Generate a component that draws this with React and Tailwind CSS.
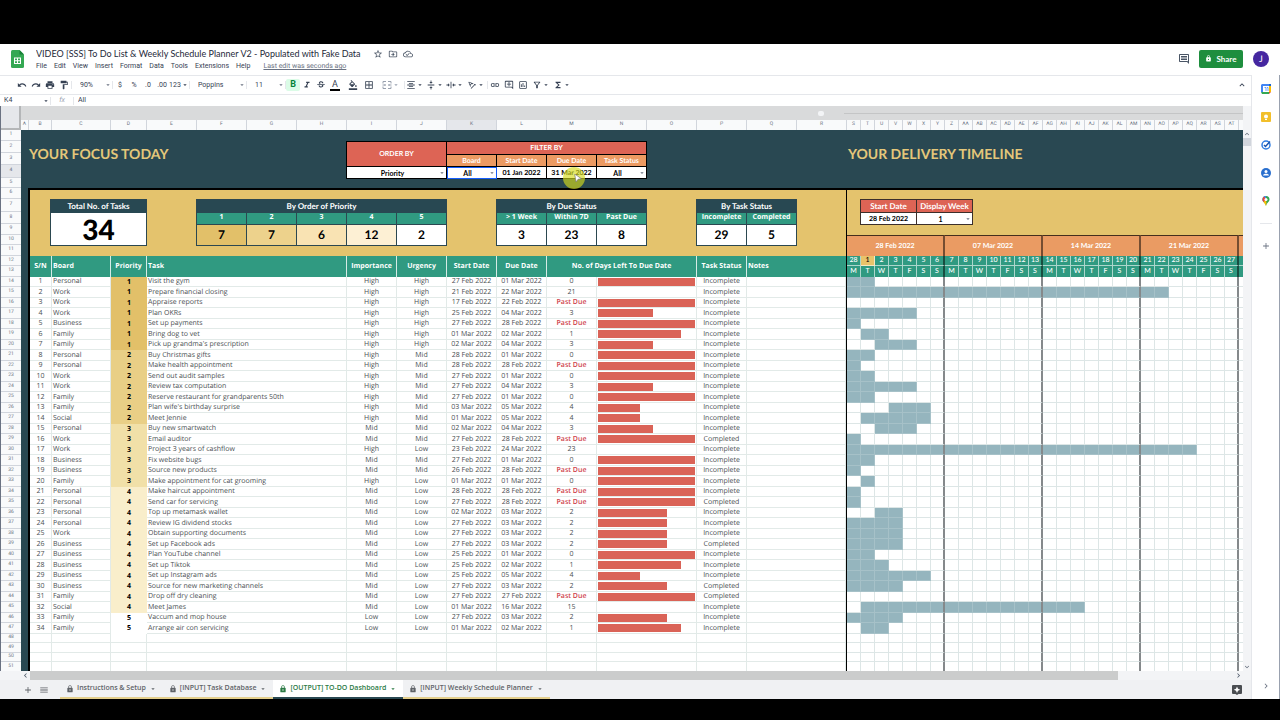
import React from 'react'
import clsx from 'clsx'
import {
    MdAdd,
    MdArrowDropDown,
    MdBorderAll,
    MdChevronLeft,
    MdChevronRight,
    MdFormatAlignCenter,
    MdFormatColorFill,
    MdFormatItalic,
    MdFormatPaint,
    MdFunctions,
    MdInsertLink,
    MdKeyboardArrowDown,
    MdKeyboardArrowUp,
    MdLock,
    MdMenu,
    MdOutlineAddComment,
    MdOutlineCloudDone,
    MdOutlineComment,
    MdOutlineDriveFileMove,
    MdOutlineFilterAlt,
    MdOutlineInsertChart,
    MdPrint,
    MdRedo,
    MdStarBorder,
    MdStrikethroughS,
    MdTextRotationAngleup,
    MdUndo,
    MdVerticalAlignCenter,
} from 'react-icons/md'

// board, priority, task, importance, urgency, start, due, days left, completed
const TASKS = [
    ['Personal', 1, 'Visit the gym', 'High', 'High', '27 Feb', '01 Mar', 0],
    ['Work', 1, 'Prepare financial closing', 'High', 'High', '21 Feb', '22 Mar', 21],
    ['Work', 1, 'Appraise reports', 'High', 'High', '17 Feb', '22 Feb', -1],
    ['Work', 1, 'Plan OKRs', 'High', 'High', '25 Feb', '04 Mar', 3],
    ['Business', 1, 'Set up payments', 'High', 'High', '27 Feb', '28 Feb', -1],
    ['Family', 1, 'Bring dog to vet', 'High', 'High', '01 Mar', '02 Mar', 1],
    ['Family', 1, "Pick up grandma's prescription", 'High', 'High', '02 Mar', '04 Mar', 3],
    ['Personal', 2, 'Buy Christmas gifts', 'High', 'Mid', '28 Feb', '01 Mar', 0],
    ['Personal', 2, 'Make health appointment', 'High', 'Mid', '28 Feb', '28 Feb', -1],
    ['Work', 2, 'Send out audit samples', 'High', 'Mid', '27 Feb', '01 Mar', 0],
    ['Work', 2, 'Review tax computation', 'High', 'Mid', '27 Feb', '04 Mar', 3],
    ['Family', 2, 'Reserve restaurant for grandparents 50th', 'High', 'Mid', '27 Feb', '01 Mar', 0],
    ['Family', 2, "Plan wife's birthday surprise", 'High', 'Mid', '03 Mar', '05 Mar', 4],
    ['Social', 2, 'Meet Jennie', 'High', 'Mid', '01 Mar', '05 Mar', 4],
    ['Personal', 3, 'Buy new smartwatch', 'Mid', 'Mid', '02 Mar', '04 Mar', 3],
    ['Work', 3, 'Email auditor', 'Mid', 'Mid', '27 Feb', '28 Feb', -1, true],
    ['Work', 3, 'Project 3 years of cashflow', 'High', 'Low', '23 Feb', '24 Mar', 23],
    ['Business', 3, 'Fix website bugs', 'Mid', 'Mid', '27 Feb', '01 Mar', 0],
    ['Business', 3, 'Source new products', 'Mid', 'Mid', '26 Feb', '28 Feb', -1],
    ['Family', 3, 'Make appointment for cat grooming', 'High', 'Low', '01 Mar', '01 Mar', 0],
    ['Personal', 4, 'Make haircut appointment', 'Mid', 'Low', '28 Feb', '28 Feb', -1],
    ['Personal', 4, 'Send car for servicing', 'Mid', 'Low', '27 Feb', '28 Feb', -1, true],
    ['Personal', 4, 'Top up metamask wallet', 'Mid', 'Low', '02 Mar', '03 Mar', 2],
    ['Personal', 4, 'Review IG dividend stocks', 'Mid', 'Low', '27 Feb', '03 Mar', 2],
    ['Work', 4, 'Obtain supporting documents', 'Mid', 'Low', '27 Feb', '03 Mar', 2],
    ['Business', 4, 'Set up Facebook ads', 'Mid', 'Low', '27 Feb', '03 Mar', 2, true],
    ['Business', 4, 'Plan YouTube channel', 'Mid', 'Low', '25 Feb', '01 Mar', 0],
    ['Business', 4, 'Set up Tiktok', 'Mid', 'Low', '25 Feb', '02 Mar', 1],
    ['Business', 4, 'Set up Instagram ads', 'Mid', 'Low', '25 Feb', '05 Mar', 4],
    ['Business', 4, 'Source for new marketing channels', 'Mid', 'Low', '27 Feb', '03 Mar', 2, true],
    ['Family', 4, 'Drop off dry cleaning', 'Mid', 'Low', '27 Feb', '27 Feb', -1, true],
    ['Social', 4, 'Meet James', 'Mid', 'Low', '01 Mar', '16 Mar', 15],
    ['Family', 5, 'Vaccum and mop house', 'Low', 'Low', '27 Feb', '03 Mar', 2],
    ['Family', 5, 'Arrange air con servicing', 'Low', 'Low', '01 Mar', '02 Mar', 1],
]

const BLANK_ROWS = [0, 1, 2, 3]
const DAYS = Array.from({ length: 35 }, (_, i) => i)
const DAY_LETTERS = ['M', 'T', 'W', 'T', 'F', 'S', 'S']
const WEEKS = ['28 Feb 2022', '07 Mar 2022', '14 Mar 2022', '21 Mar 2022', '']

const PRIORITY_BG = {
    1: 'bg-[#e2c069]',
    2: 'bg-[#e9cf86]',
    3: 'bg-[#f1e0a8]',
    4: 'bg-[#f9eecb]',
    5: 'bg-white',
}

const COLUMNS = [
    ['A', 'w-[8px]'],
    ['B', 'w-[23px]'],
    ['C', 'w-[59px]'],
    ['D', 'w-[36px]'],
    ...'EFGHIJKLMNOPQR'.split('').map((c) => [c, 'w-[50px]']),
    ...'STUVWXYZ'.split('').map((c) => [c, 'w-[14px]']),
    ...'ABCDEFGHIJKLMNOPQRST'.split('').map((c) => ['A' + c, 'w-[14px]']),
]

const TOP_ROWS = [
    'h-[11px]',
    'h-[12px]',
    'h-[12px]',
    'h-[13px]',
    'h-[10px]',
    'h-[11px]',
    'h-[13px]',
    'h-[12px]',
    'h-[11px]',
    'h-[10px]',
    'h-[11px]',
    'h-[10px]',
    'h-[11px]',
]
const ROW_HEIGHTS = [
    ...TOP_ROWS,
    ...TASKS.map((_, i) => (i % 2 ? 'h-[11px]' : 'h-[10px]')),
    ...BLANK_ROWS.map((i) => (i % 2 ? 'h-[10px]' : 'h-[9px]')),
]

const ICON = 'h-[10px] w-[10px]'
const SIDE_ICON = 'flex h-7 w-full items-center justify-center'

// day index counted from Monday 28 Feb
const dayIndex = (date) => {
    const [day, month] = date.split(' ')
    return month === 'Feb' ? Number(day) - 28 : Number(day)
}

const Caret = ({ className }) => (
    <MdArrowDropDown className={clsx('h-2 w-2 shrink-0', className)} />
)

const Separator = () => <div className="h-2 w-px bg-gray-200" />

const Tool = ({ label, active, children, className }) => (
    <button
        aria-label={label}
        className={clsx(
            'flex h-3 items-center justify-center rounded-xs',
            active && 'bg-green-100 text-green-700',
            className || 'w-[14px]'
        )}
    >
        {children}
    </button>
)

const PickList = ({ label, value, options, className, left }) => (
    <div className={clsx('flex items-center', className)}>
        <select
            aria-label={label}
            defaultValue={value}
            className={clsx(
                'min-w-0 flex-1 appearance-none bg-transparent outline-none',
                left ? 'text-left' : 'text-center'
            )}
        >
            {options.map((o) => (
                <option key={o}>{o}</option>
            ))}
        </select>
        <Caret className="pointer-events-none text-gray-500" />
    </div>
)

const SheetsLogo = () => (
    <svg viewBox="0 0 26 36" className="h-[18px] w-[13px]">
        <path d="M3 0h14l9 9v24a3 3 0 0 1-3 3H3a3 3 0 0 1-3-3V3a3 3 0 0 1 3-3z" fill="#34a853" />
        <path d="M17 0l9 9h-9z" fill="#188038" />
        <path
            d="M6 15h14v13H6zM8 17v3.500h4V17zM14 17v3.500h4V17zM8 22.500V26h4v-3.500zM14 22.500V26h4v-3.500z"
            fill="#fff"
            fillRule="evenodd"
        />
    </svg>
)

const MergeIcon = () => (
    <svg viewBox="0 0 20 20" className={ICON} fill="none" stroke="currentColor" strokeWidth="2">
        <path d="M8 3H2v4M12 3h6v4M8 17H2v-4M12 17h6v-4M1 10h6M5 8l2 2-2 2M19 10h-6M15 8l-2 2 2 2" />
    </svg>
)

const Header = () => (
    <header className="flex h-[31px] shrink-0 items-center bg-white px-[11px] pb-[2px]">
        <SheetsLogo />
        <div className="ml-3 flex-1 pt-[3px]">
            <div className="flex items-center text-gray-600">
                <input
                    aria-label="Document name"
                    defaultValue="VIDEO [SSS] To Do List & Weekly Schedule Planner V2 - Populated with Fake Data"
                    className="field-sizing-content text-[9px] leading-[13px] text-gray-800 outline-none"
                />
                <div className="ml-3 flex gap-[5px]">
                    <button aria-label="Star">
                        <MdStarBorder className={ICON} />
                    </button>
                    <button aria-label="Move">
                        <MdOutlineDriveFileMove className={ICON} />
                    </button>
                    <button aria-label="Saved to Drive">
                        <MdOutlineCloudDone className={ICON} />
                    </button>
                </div>
            </div>
            <nav className="flex gap-[7px] font-[Roboto,sans-serif] text-[7px] leading-[13px] text-gray-700">
                {['File', 'Edit', 'View', 'Insert', 'Format', 'Data', 'Tools', 'Extensions', 'Help'].map((m) => (
                    <button key={m}>{m}</button>
                ))}
                <a href="#history" className="ml-[6px] text-gray-500 underline">
                    Last edit was seconds ago
                </a>
            </nav>
        </div>
        <button aria-label="Comments" className="mr-[9px] text-gray-600">
            <MdOutlineComment className="h-3 w-3" />
        </button>
        <button className="flex h-[18px] w-11 items-center justify-center gap-1 rounded-xs bg-[#1e8e3e] text-[8px] font-bold text-white">
            <MdLock className="h-[7px] w-[7px]" />
            Share
        </button>
        <div className="ml-[10px] flex h-4 w-4 items-center justify-center rounded-full bg-[#4527a0] text-[9px] text-white">
            J
        </div>
    </header>
)

const Toolbar = () => (
    <div className="flex h-5 shrink-0 items-center border-y border-gray-200 pr-1 pl-[15px] font-[Roboto,sans-serif] text-[7px] text-gray-700">
        <Tool label="Undo"><MdUndo className={ICON} /></Tool>
        <Tool label="Redo"><MdRedo className={ICON} /></Tool>
        <Tool label="Print"><MdPrint className={ICON} /></Tool>
        <Tool label="Paint format"><MdFormatPaint className={ICON} /></Tool>
        <Separator />
        <PickList label="Zoom" value="90%" options={['75%', '90%', '100%']} className="w-10 pl-2" left />
        <Separator />
        <Tool label="Format as currency">$</Tool>
        <Tool label="Format as percent">%</Tool>
        <Tool label="Decrease decimal places">.0</Tool>
        <Tool label="Increase decimal places">.00</Tool>
        <Tool label="More formats" className="w-5">
            123
            <Caret />
        </Tool>
        <Separator />
        <PickList label="Font" value="Poppins" options={['Poppins', 'Arial']} className="w-[56px] pl-2" left />
        <Separator />
        <PickList label="Font size" value="11" options={['10', '11', '12']} className="w-[38px] pl-2" left />
        <Separator />
        <Tool label="Bold" active><b className="text-[9px]">B</b></Tool>
        <Tool label="Italic"><MdFormatItalic className={ICON} /></Tool>
        <Tool label="Strikethrough"><MdStrikethroughS className={ICON} /></Tool>
        <Tool label="Text color">
            <span className="w-[10px] border-b-2 border-black text-[9px] leading-[9px]">A</span>
        </Tool>
        <div className="ml-1 flex items-center gap-[2px]">
            <Tool label="Fill color"><MdFormatColorFill className={ICON} /></Tool>
            <Tool label="Borders"><MdBorderAll className={ICON} /></Tool>
            <Tool label="Merge cells" className="w-[26px] text-gray-400"><MergeIcon /><Caret /></Tool>
        </div>
        <Separator />
        <Tool label="Horizontal align" className="w-5"><MdFormatAlignCenter className={ICON} /><Caret /></Tool>
        <Tool label="Vertical align" className="w-5"><MdVerticalAlignCenter className={ICON} /><Caret /></Tool>
        <Tool label="Text wrapping" className="w-5"><MdVerticalAlignCenter className="h-[10px] w-[10px] rotate-90" /><Caret /></Tool>
        <Tool label="Text rotation" className="w-[22px]"><MdTextRotationAngleup className={ICON} /><Caret /></Tool>
        <Separator />
        <Tool label="Insert link"><MdInsertLink className={ICON} /></Tool>
        <Tool label="Insert comment"><MdOutlineAddComment className={ICON} /></Tool>
        <Tool label="Insert chart"><MdOutlineInsertChart className={ICON} /></Tool>
        <Tool label="Filter" className="w-[22px]"><MdOutlineFilterAlt className={ICON} /><Caret /></Tool>
        <Tool label="Functions" className="w-5"><MdFunctions className={ICON} /><Caret /></Tool>
        <button aria-label="Hide the menus" className="ml-auto">
            <MdKeyboardArrowUp className={ICON} />
        </button>
    </div>
)

const FormulaBar = () => (
    <div className="flex h-[11px] shrink-0 items-center bg-white pl-1 font-[Roboto,sans-serif] text-[7px] leading-[9px] text-gray-700">
        <input aria-label="Name box" defaultValue="K4" className="w-[38px] outline-none" />
        <Caret />
        <Separator />
        <i className="w-[22px] text-center text-gray-400">fx</i>
        <Separator />
        <input aria-label="Formula" defaultValue="All" className="ml-1 min-w-0 flex-1 outline-none" />
    </div>
)

const FILTER_HEAD = 'border border-black bg-[#ec9a62] p-0 font-bold'
const FILTER_CELL = 'border border-black bg-white p-0'

const FilterTable = () => (
    <table className="w-[301px] table-fixed border-collapse self-start text-center text-[7px] leading-[10px] font-bold text-white">
        <thead>
            <tr className="h-[13px] bg-[#dd6455]">
                <th rowSpan="2" className="w-[100px] border border-black p-0">ORDER BY</th>
                <th colSpan="4" className="border border-black p-0">FILTER BY</th>
            </tr>
            <tr className="h-[12px]">
                <th className={FILTER_HEAD}>Board</th>
                <th className={FILTER_HEAD}>Start Date</th>
                <th className={FILTER_HEAD}>Due Date</th>
                <th className={FILTER_HEAD}>Task Status</th>
            </tr>
        </thead>
        <tbody>
            <tr className="h-[12px] text-black">
                <td className={FILTER_CELL}>
                    <PickList label="Order by" value="Priority" options={['Priority', 'Due Date']} />
                </td>
                <td className="border border-black bg-white p-0 outline-1 -outline-offset-1 outline-blue-600">
                    <PickList label="Board" value="All" options={['All', 'Work', 'Family']} />
                </td>
                <td className={FILTER_CELL}>01 Jan 2022</td>
                <td className="relative border border-black bg-white p-0">
                    31 Mar 2022
                    <span className="pointer-events-none absolute top-0 left-4 h-[22px] w-[22px] rounded-full bg-[#d6dc1c]/65" />
                    <svg viewBox="0 0 12 12" className="pointer-events-none absolute top-[7px] left-[27px] h-2 w-2">
                        <path d="M1 0l10 7-5 1-3 4z" fill="#fff" stroke="#777" />
                    </svg>
                </td>
                <td className={FILTER_CELL}>
                    <PickList label="Task status" value="All" options={['All', 'Incomplete', 'Completed']} />
                </td>
            </tr>
        </tbody>
    </table>
)

const StatTable = ({ title, items, className }) => (
    <table
        className={clsx(
            'h-[47px] table-fixed border-collapse self-start border border-[#2b4750] text-center leading-[10px]',
            className
        )}
    >
        <thead className="text-[7px] text-white">
            <tr className="h-[13px] bg-[#284852]">
                <th colSpan={items.length} className="p-0 text-[8px]">{title}</th>
            </tr>
            <tr className="h-[12px] bg-[#309a81] font-['Open_Sans',sans-serif]">
                {items.map(([name]) => (
                    <th key={name} className="border-x border-[#2b4750] p-0">{name}</th>
                ))}
            </tr>
        </thead>
        <tbody>
            <tr className="text-[12px] font-bold text-black">
                {items.map(([name, value, bg]) => (
                    <td key={name} className={clsx('border border-[#2b4750] p-0', bg || 'bg-white')}>
                        {value}
                    </td>
                ))}
            </tr>
        </tbody>
    </table>
)

const TH = 'border-r border-white/80 p-0'
const TD = 'overflow-hidden border-r border-b border-[#e2eae8] p-0'

const TaskTable = () => (
    <table className="w-[816px] table-fixed border-separate border-spacing-0 bg-white text-center font-['Open_Sans',sans-serif] text-[7px] leading-[9px] whitespace-nowrap text-[#4a4f52]">
        <colgroup>
            <col className="w-[22px]" />
            <col className="w-[59px]" />
            <col className="w-[36px]" />
            <col className="w-[200px]" />
            <col className="w-[50px]" />
            <col className="w-[50px]" />
            <col className="w-[50px]" />
            <col className="w-[50px]" />
            <col className="w-[50px]" />
            <col className="w-[100px]" />
            <col className="w-[50px]" />
            <col className="w-[99px]" />
        </colgroup>
        <thead>
            <tr className="h-[21px] bg-[#309a81] text-white">
                <th className={TH}>S/N</th>
                <th className="border-r border-white/80 p-0 pl-px text-left">Board</th>
                <th className={TH}>Priority</th>
                <th className="border-r border-white/80 p-0 pl-px text-left">Task</th>
                <th className={TH}>Importance</th>
                <th className={TH}>Urgency</th>
                <th className={TH}>Start Date</th>
                <th className={TH}>Due Date</th>
                <th colSpan="2" className={TH}>No. of Days Left To Due Date</th>
                <th className={TH}>Task Status</th>
                <th className="p-0 pl-px text-left">Notes</th>
            </tr>
        </thead>
        <tbody>
            {TASKS.map(([board, priority, task, importance, urgency, start, due, left, done], i) => (
                <tr key={task} className="odd:h-[10px] even:h-[11px]">
                    <td className={TD}>{i + 1}</td>
                    <td className="border-r border-b border-[#e2eae8] p-0 pl-px text-left">{board}</td>
                    <td className={clsx('p-0 font-bold text-black', PRIORITY_BG[priority])}>{priority}</td>
                    <td className="border-r border-b border-[#e2eae8] p-0 pl-px text-left">{task}</td>
                    <td className={TD}>{importance}</td>
                    <td className={TD}>{urgency}</td>
                    <td className={TD}>{start} 2022</td>
                    <td className={TD}>{due} 2022</td>
                    <td className={clsx(TD, left < 0 && 'font-semibold text-[#cf3f4c]')}>
                        {left < 0 ? 'Past Due' : left}
                    </td>
                    <td className="border-r border-b border-[#e2eae8] p-0 px-px">
                        <div
                            className="h-2 bg-[#da6357]"
                            style={{ width: `${(Math.max(0, 7 - Math.max(0, left)) / 7) * 100}%` }}
                        />
                    </td>
                    <td className={TD}>{done ? 'Completed' : 'Incomplete'}</td>
                    <td className={TD} />
                </tr>
            ))}
            {BLANK_ROWS.map((r) => (
                <tr key={r} className="odd:h-[9px] even:h-[10px]">
                    {Array.from({ length: 12 }, (_, c) => (
                        <td key={c} className={TD} />
                    ))}
                </tr>
            ))}
        </tbody>
    </table>
)

const weekEdge = (d) =>
    d % 7 === 6 ? 'border-r-2 border-r-[#85898b]' : 'border-r border-r-[#dde6e6]'

const Timeline = () => (
    <table className="w-[490px] table-fixed border-separate border-spacing-0 bg-white text-center text-[7px] leading-[9px] text-white">
        <thead>
            <tr className="h-[21px] bg-[#ea9b63]">
                {WEEKS.map((week) => (
                    <th
                        key={week}
                        colSpan="7"
                        className="border-t border-r-2 border-t-black/70 border-r-black/50 p-0"
                    >
                        {week}
                    </th>
                ))}
            </tr>
            <tr className="h-[10px] bg-[#309a81]">
                {DAYS.map((d) => (
                    <th
                        key={d}
                        className={clsx(
                            'border-b border-b-white/60 p-0 font-medium',
                            d % 7 === 6 ? 'border-r-2 border-r-black/50' : 'border-r border-r-white/60',
                            d === 1 && 'bg-[#e8c36a] text-black'
                        )}
                    >
                        {d < 28 && (d || 28)}
                    </th>
                ))}
            </tr>
            <tr className="h-[11px] bg-[#309a81]">
                {DAYS.map((d) => (
                    <th
                        key={d}
                        className={clsx(
                            'p-0 font-medium',
                            d % 7 === 6 ? 'border-r-2 border-r-black/50' : 'border-r border-r-white/60'
                        )}
                    >
                        {d < 28 && DAY_LETTERS[d % 7]}
                    </th>
                ))}
            </tr>
        </thead>
        <tbody>
            {TASKS.map(([, , task, , , start, due]) => (
                <tr key={task} className="odd:h-[10px] even:h-[11px]">
                    {DAYS.map((d) => {
                        const busy = d >= dayIndex(start) && d <= dayIndex(due)
                        return (
                            <td
                                key={d}
                                className={clsx(
                                    'border-b p-0',
                                    busy && d % 7 !== 6 ? 'border-r border-r-[#a6c1c8]' : weekEdge(d),
                                    busy ? 'border-b-[#a6c1c8] bg-[#95b5be]' : 'border-b-[#dde6e6]'
                                )}
                            />
                        )
                    })}
                </tr>
            ))}
            {BLANK_ROWS.map((r) => (
                <tr key={r} className="odd:h-[9px] even:h-[10px]">
                    {DAYS.map((d) => (
                        <td key={d} className={clsx('border-b border-b-[#dde6e6] p-0', weekEdge(d))} />
                    ))}
                </tr>
            ))}
        </tbody>
    </table>
)

const Dashboard = () => (
    <section className="w-[818px] shrink-0 border-l-2 border-black bg-white">
        <div className="flex h-[66px] gap-[50px] bg-[#e4c36d] pt-[9px] pl-[20px]">
            <table className="-mr-px h-[47px] w-[97px] border-collapse self-start border border-[#2b4750] text-center">
                <thead>
                    <tr className="h-[13px] bg-[#284852] text-white">
                        <th className="p-0 text-[8px] leading-[10px]">Total No. of Tasks</th>
                    </tr>
                </thead>
                <tbody>
                    <tr className="bg-white text-[28px] leading-[32px] font-black text-black">
                        <td className="p-0">34</td>
                    </tr>
                </tbody>
            </table>
            <StatTable
                title="By Order of Priority"
                className="-mr-px w-[251px]"
                items={[
                    ['1', 7, PRIORITY_BG[1]],
                    ['2', 7, 'bg-[#edd28c]'],
                    ['3', 6, 'bg-[#f9e3b3]'],
                    ['4', 12, 'bg-[#fdf0d4]'],
                    ['5', 2],
                ]}
            />
            <StatTable
                title="By Due Status"
                className="-mr-px w-[151px]"
                items={[['> 1 Week', 3], ['Within 7D', 23], ['Past Due', 8]]}
            />
            <StatTable
                title="By Task Status"
                className="w-[101px]"
                items={[['Incomplete', 29], ['Completed', 5]]}
            />
        </div>
        <TaskTable />
    </section>
)

const DeliveryTimeline = () => (
    <section className="min-w-0 flex-1 overflow-hidden border-l border-black bg-white">
        <div className="h-[45px] bg-[#e4c36d] pt-[9px] pl-[13px]">
            <table className="h-[26px] w-[113px] table-fixed border-collapse text-center text-[8px] leading-[10px] font-bold text-black">
                <thead>
                    <tr className="h-[13px] bg-[#dd6455] text-white">
                        <th className="border border-[#3c2f2b] p-0">Start Date</th>
                        <th className="border border-[#3c2f2b] p-0 whitespace-nowrap">Display Week</th>
                    </tr>
                </thead>
                <tbody>
                    <tr className="h-[12px] bg-white text-[7px]">
                        <td className="border border-[#3c2f2b] p-0">28 Feb 2022</td>
                        <td className="border border-[#3c2f2b] p-0">
                            <PickList label="Display week" value="1" options={['1', '2', '3']} />
                        </td>
                    </tr>
                </tbody>
            </table>
        </div>
        <Timeline />
    </section>
)

const Grid = () => (
    <div className="flex min-h-0 flex-1">
        <div className="w-[21px] shrink-0 overflow-hidden border-l border-gray-500 bg-gray-50 text-center font-[Roboto,sans-serif] text-[5px] text-gray-500">
            <div className="h-6 border-r-2 border-b-2 border-[#b4b6b8] bg-gray-200" />
            {ROW_HEIGHTS.map((h, i) => (
                <div
                    key={i}
                    className={clsx(
                        'flex items-center justify-center border-b border-gray-300',
                        h,
                        i === 3 && 'bg-gray-200'
                    )}
                >
                    {i + 1}
                </div>
            ))}
        </div>
        <div className="flex min-w-0 flex-1 flex-col overflow-hidden">
            <div className="flex h-[14px] shrink-0 items-center bg-[#d9dadb] pl-[797px]">
                <span className="h-[5px] w-[6px] rounded-xs bg-gray-100" />
                <span className="ml-5 h-px flex-1 bg-[#c4c5c6]" />
            </div>
            <div className="flex h-[10px] shrink-0 bg-gray-50 font-[Roboto,sans-serif] text-[5px] text-gray-500">
                {COLUMNS.map(([name, width]) => (
                    <div
                        key={name}
                        className={clsx(
                            'flex shrink-0 items-center justify-center border-r border-gray-300',
                            width,
                            name === 'K' && 'bg-gray-200'
                        )}
                    >
                        {name}
                    </div>
                ))}
            </div>
            <div className="flex min-h-0 flex-1 flex-col bg-[#294852] pl-[7px]">
                <div className="flex h-[58px] shrink-0 pt-[11px] text-[14px] leading-[26px] font-bold text-[#e4c77a]">
                    <h1 className="w-[318px] shrink-0 pl-px">YOUR FOCUS TODAY</h1>
                    <div className="w-[500px] shrink-0">
                        <FilterTable />
                    </div>
                    <h1 className="pl-[2px] whitespace-nowrap">YOUR DELIVERY TIMELINE</h1>
                </div>
                <div className="flex min-h-0 flex-1 overflow-hidden border-t-2 border-black">
                    <Dashboard />
                    <DeliveryTimeline />
                </div>
            </div>
        </div>
        <div className="flex w-2 shrink-0 flex-col items-center bg-gray-100 pt-6 text-gray-600">
            <MdKeyboardArrowUp className="h-2 w-2" />
            <div className="h-2 w-full bg-gray-300" />
            <MdKeyboardArrowDown className="mt-auto h-2 w-2" />
        </div>
    </div>
)

const SheetTab = ({ name, active }) => (
    <button
        className={clsx(
            'flex items-center gap-[3px] border-b-2 px-[6px] whitespace-nowrap',
            active ? 'border-[#294852] bg-white text-[#2c7a45]' : 'border-[#e4cf8c]'
        )}
    >
        <MdLock className="h-2 w-2" />
        <span>{name}</span>
        <Caret />
    </button>
)

const TabBar = () => (
    <footer className="flex h-[19px] shrink-0 bg-[#f0f1f3] pr-[9px] pl-[23px] font-['Open_Sans',sans-serif] text-[7px] font-semibold text-[#5f6368]">
        <button aria-label="Add sheet" className="w-[11px]"><MdAdd className={ICON} /></button>
        <button aria-label="All sheets" className="mr-2 ml-[5px] w-[13px]"><MdMenu className={ICON} /></button>
        <div className="flex">
            <SheetTab name="Instructions & Setup" />
            <SheetTab name="[INPUT] Task Database" />
            <SheetTab name="[OUTPUT] TO-DO Dashboard" active />
            <SheetTab name="[INPUT] Weekly Schedule Planner" />
        </div>
        <button aria-label="Explore" className="ml-auto">
            <svg viewBox="0 0 20 20" className={ICON}>
                <path d="M2 0h16a2 2 0 0 1 2 2v14a2 2 0 0 1-2 2h-5l-3 2-3-2H2a2 2 0 0 1-2-2V2a2 2 0 0 1 2-2z" fill="#4a4d51" />
                <path d="M10 3l2 4.500 4.500 2-4.500 2-2 4.500-2-4.500-4.500-2 4.500-2z" fill="#fff" />
            </svg>
        </button>
    </footer>
)

const SidePanel = () => (
    <aside className="flex w-[29px] shrink-0 flex-col items-center border-r border-l border-r-gray-400 border-l-gray-200 bg-white text-gray-500">
        <button aria-label="Calendar" className={SIDE_ICON}>
            <svg viewBox="0 0 20 20" className={ICON}>
                <path d="M2 0h14v4H4v12H0V2z" fill="#4285f4" />
                <path d="M16 0h4v4h-4z" fill="#1967d2" />
                <path d="M16 4h4v12h-4z" fill="#fbbc04" />
                <path d="M0 16h16v4H2z" fill="#34a853" />
                <path d="M16 16h4l-4 4z" fill="#ea4335" />
                <path d="M7 7h3v7M12 7h2v7" fill="none" stroke="#4285f4" strokeWidth="1.500" />
            </svg>
        </button>
        <button aria-label="Keep" className={SIDE_ICON}>
            <svg viewBox="0 0 20 20" className={ICON}>
                <rect width="20" height="20" rx="2" fill="#f2bf2b" />
                <circle cx="10" cy="9" r="4" fill="#fff" />
                <path d="M8 14h4v2H8z" fill="#fff" />
            </svg>
        </button>
        <button aria-label="Tasks" className={SIDE_ICON}>
            <svg viewBox="0 0 20 20" className={ICON}>
                <circle cx="10" cy="10" r="8" fill="none" stroke="#2f7de1" strokeWidth="3" />
                <path d="M6 10l3 3 9-10" fill="none" stroke="#1a56b0" strokeWidth="3" />
            </svg>
        </button>
        <button aria-label="Contacts" className={SIDE_ICON}>
            <svg viewBox="0 0 20 20" className={ICON}>
                <circle cx="10" cy="10" r="10" fill="#2a6fce" />
                <circle cx="10" cy="7" r="3" fill="#fff" />
                <path d="M4 15c0-5 12-5 12 0z" fill="#fff" />
            </svg>
        </button>
        <button aria-label="Maps" className={SIDE_ICON}>
            <svg viewBox="0 0 20 20" className={ICON}>
                <path d="M10 0a7 7 0 0 0-7 7c0 5 6 7 7 13 1-6 7-8 7-13a7 7 0 0 0-7-7z" fill="#34a853" />
                <path d="M3 7a7 7 0 0 1 7-7v7l-5 5c-1-1-2-3-2-5z" fill="#4285f4" />
                <path d="M3 7a7 7 0 0 1 3-6l4 6-5 5c-1-1-2-3-2-5z" fill="#ea4335" />
                <path d="M5 12l5-5 1 8-1 5c-1-4-3-5-5-8z" fill="#fbbc04" />
                <circle cx="10" cy="7" r="3" fill="#fff" />
            </svg>
        </button>
        <div className="mt-2 h-px w-3 bg-gray-200" />
        <button aria-label="Get add-ons" className="mt-[17px]">
            <MdAdd className={ICON} />
        </button>
        <button aria-label="Hide side panel" className="mt-auto mb-2">
            <MdChevronRight className={ICON} />
        </button>
    </aside>
)

const App = () => {
    return (
        <div className="flex h-screen flex-col overflow-hidden bg-black pt-11 pb-[21px] font-[Lato,sans-serif] [text-rendering:geometricPrecision]">
            <Header />
            <div className="flex min-h-0 flex-1 bg-white">
                <main className="flex min-w-0 flex-1 flex-col">
                    <Toolbar />
                    <FormulaBar />
                    <Grid />
                    <div className="flex h-[9px] shrink-0 items-center bg-gray-100 pr-2 pl-[21px] text-gray-600">
                        <MdChevronLeft className="h-[9px] w-[9px]" />
                        <div className="h-full w-[89%] bg-[#cbcccc]" />
                        <MdChevronRight className="ml-auto h-[9px] w-[9px]" />
                    </div>
                    <TabBar />
                </main>
                <SidePanel />
            </div>
        </div>
    )
}

export default App
